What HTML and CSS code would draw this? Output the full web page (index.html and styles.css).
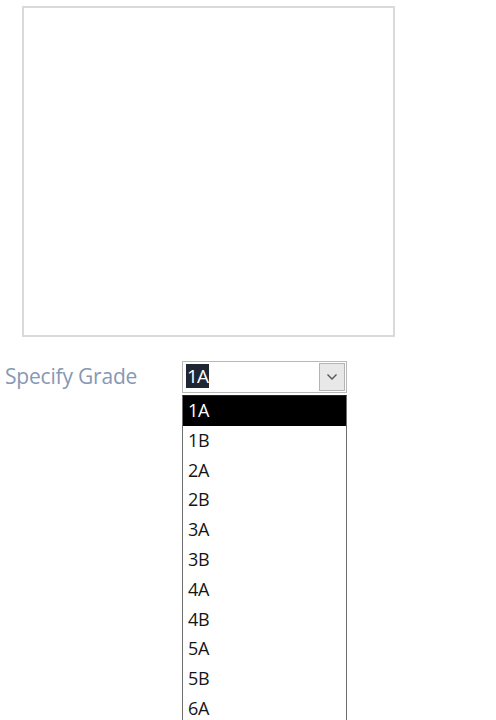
FILE: index.html
```html
<!DOCTYPE html>
<html>
<head>
<meta charset="utf-8">
<link rel="stylesheet" href="styles.css">
</head>
<body>
<div class="page">
  <div class="frame"></div>
  <div class="row">
    <div class="label">Specify Grade</div>
    <div class="combo-wrap">
      <div class="combo">
        <span class="value"><span class="sel">1A</span></span>
        <span class="btn">
          <svg width="12" height="8" viewBox="0 0 12 8"><path d="M1.5 1.5 L6 6 L10.5 1.5" fill="none" stroke="#555" stroke-width="1.4"/></svg>
        </span>
      </div>
      <ul class="list">
        <li class="active">1A</li>
        <li>1B</li>
        <li>2A</li>
        <li>2B</li>
        <li>3A</li>
        <li>3B</li>
        <li>4A</li>
        <li>4B</li>
        <li>5A</li>
        <li>5B</li>
        <li>6A</li>
      </ul>
    </div>
  </div>
</div>
</body>
</html>
```
FILE: styles.css
```css
html, body {
  margin: 0;
  padding: 0;
  background: #fff;
  overflow: hidden;
  height: 720px;
}
.page {
  font-family: "Open Sans", "Noto Sans", sans-serif;
  padding-top: 6px;
}
.frame {
  margin-left: 22px;
  width: 373px;
  height: 331px;
  box-sizing: border-box;
  border: 2px solid #dadada;
}
.row {
  display: flex;
  margin-top: 24px;
}
.label {
  width: 177px;
  padding-left: 5px;
  padding-top: 2px;
  color: #8698b4;
  font-size: 21px;
  line-height: 26px;
  letter-spacing: -0.2px;
}
.combo-wrap {
  width: 165px;
}
.combo {
  display: flex;
  height: 32px;
  box-sizing: border-box;
  border: 1px solid #b8b8b8;
  background: #fff;
}
.value {
  flex: 1;
  padding: 2px 0 0 3px;
}
.sel {
  display: inline-block;
  background: #1e2633;
  color: #fff;
  font-size: 19px;
  line-height: 24px;
  padding: 0 1px;
  letter-spacing: -0.8px;
}
.btn {
  width: 24px;
  margin: 1px 1px 1px 0;
  background: #e8e8e8;
  border: 1px solid #b4b4b4;
  display: flex;
  align-items: center;
  justify-content: center;
}
.list {
  list-style: none;
  margin: 2px 0 0 0;
  padding: 0 0 4px 0;
  border: 1px solid #6e6e6e;
  border-top-color: #222;
  background: #fff;
}
.list li {
  height: 29.8px;
  line-height: 29.8px;
  padding-left: 5px;
  font-size: 18px;
  color: #151515;
  letter-spacing: -0.3px;
}
.list li.active {
  background: #000;
  color: #fff;
}
```
